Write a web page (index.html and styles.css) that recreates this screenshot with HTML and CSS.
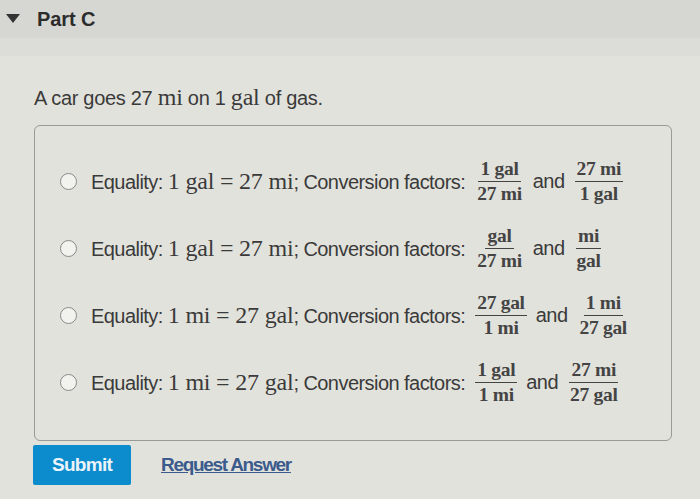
FILE: index.html
```html
<!DOCTYPE html>
<html lang="en">
<head>
    <meta charset="UTF-8">
    <meta name="viewport" content="width=device-width, initial-scale=1.0">
    <title>Part C</title>
    <link rel="stylesheet" href="styles.css">
</head>
<body>
    <header class="part-head">
        <svg class="caret" width="14" height="10" viewBox="0 0 14 10"><polygon points="0,0 14,0 7,9" fill="#333"/></svg>
        <h2>Part C</h2>
    </header>

    <main class="content">
        <p class="question">A car goes 27 <span class="m">mi</span> on 1 <span class="m">gal</span> of gas.</p>

        <div class="choices">
            <label class="option">
                <span class="radio"></span>
                <span class="text">Equality: <span class="m">1 gal = 27 mi</span>; Conversion factors:</span>
                <span class="frac"><span class="num">1 gal</span><span class="den">27 mi</span></span>
                <span class="and">and</span>
                <span class="frac"><span class="num">27 mi</span><span class="den">1 gal</span></span>
            </label>
            <label class="option">
                <span class="radio"></span>
                <span class="text">Equality: <span class="m">1 gal = 27 mi</span>; Conversion factors:</span>
                <span class="frac"><span class="num">gal</span><span class="den">27 mi</span></span>
                <span class="and">and</span>
                <span class="frac"><span class="num">mi</span><span class="den">gal</span></span>
            </label>
            <label class="option">
                <span class="radio"></span>
                <span class="text">Equality: <span class="m">1 mi = 27 gal</span>; Conversion factors:</span>
                <span class="frac"><span class="num">27 gal</span><span class="den">1 mi</span></span>
                <span class="and">and</span>
                <span class="frac"><span class="num">1 mi</span><span class="den">27 gal</span></span>
            </label>
            <label class="option">
                <span class="radio"></span>
                <span class="text">Equality: <span class="m">1 mi = 27 gal</span>; Conversion factors:</span>
                <span class="frac"><span class="num">1 gal</span><span class="den">1 mi</span></span>
                <span class="and">and</span>
                <span class="frac"><span class="num">27 mi</span><span class="den">27 gal</span></span>
            </label>
        </div>

        <div class="actions">
            <button class="submit">Submit</button>
            <a href="#" class="request">Request Answer</a>
        </div>
    </main>
</body>
</html>
```

FILE: styles.css
```css
body { margin: 0; font-family: "Liberation Sans", Arial, sans-serif; color: #333; background: #e2e2dc; }
.part-head { display: flex; align-items: center; height: 38px; padding: 0 0 0 6px; background: #d6d7d3; border-bottom: 18px solid #dcddd8; }
.part-head .caret { margin-right: 17px; }
.part-head h2 { margin: 0; font-size: 20px; font-weight: bold; letter-spacing: -0.1px; color: #2c2c2c; }
.content { padding: 0 28px 0 34px; }
.question { margin: 28px 0 0; font-size: 20px; letter-spacing: -0.3px; color: #3a3a3a; }
.m { font-family: "Liberation Serif", "Times New Roman", serif; font-size: 24px; letter-spacing: -0.2px; }
.choices { margin-top: 14px; border: 1px solid #9a9a96; border-radius: 6px; padding: 22px 0 24px 22px; }
.option { display: flex; align-items: center; height: 67px; font-size: 20px; letter-spacing: -0.55px; color: #3a3a3a; }
.radio { width: 15px; height: 15px; border: 1.5px solid #888; border-radius: 50%; background: #f2f2ee; margin: 0 14px 0 3px; flex: none; }
.text { white-space: nowrap; }
.frac { display: inline-flex; flex-direction: column; align-items: center; margin-left: 10px; font-family: "Liberation Serif", "Times New Roman", serif; font-size: 19.5px; font-weight: bold; letter-spacing: -0.3px; color: #444; }
.frac .num { padding: 0 2px 1px; border-bottom: 1.5px solid #444; }
.frac .den { padding: 1px 2px 0; }
.and { margin-left: 9px; }
.actions { display: flex; align-items: center; margin-top: 4px; }
.submit { width: 98px; height: 40px; background: #0c8bcd; color: #eaf4fa; border: none; border-radius: 2px; font-family: "Liberation Sans", Arial, sans-serif; font-size: 19px; font-weight: bold; letter-spacing: -0.7px; margin-left: -1px; }
.request { margin-left: 30px; color: #3b5b8c; font-size: 19px; font-weight: bold; letter-spacing: -1.3px; text-decoration: underline; }
```
